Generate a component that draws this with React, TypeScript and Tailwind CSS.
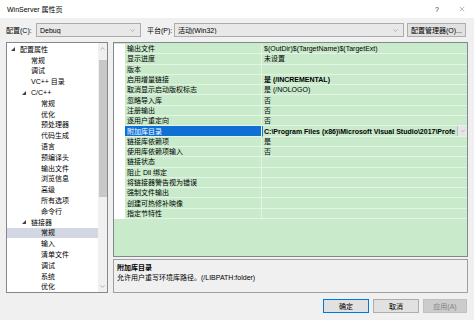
import { ChevronDown, ChevronUp, X } from 'lucide-react';

type TreeItem = { label: string; level: number; caret?: boolean; selected?: boolean };
type PropRow = { name: string; value: string; bold?: boolean; selected?: boolean };

const tree: TreeItem[] = [
  { label: '配置属性', level: 0, caret: true },
  { label: '常规', level: 1 },
  { label: '调试', level: 1 },
  { label: 'VC++ 目录', level: 1 },
  { label: 'C/C++', level: 1, caret: true },
  { label: '常规', level: 2 },
  { label: '优化', level: 2 },
  { label: '预处理器', level: 2 },
  { label: '代码生成', level: 2 },
  { label: '语言', level: 2 },
  { label: '预编译头', level: 2 },
  { label: '输出文件', level: 2 },
  { label: '浏览信息', level: 2 },
  { label: '高级', level: 2 },
  { label: '所有选项', level: 2 },
  { label: '命令行', level: 2 },
  { label: '链接器', level: 1, caret: true },
  { label: '常规', level: 2, selected: true },
  { label: '输入', level: 2 },
  { label: '清单文件', level: 2 },
  { label: '调试', level: 2 },
  { label: '系统', level: 2 },
  { label: '优化', level: 2 },
];

const props: PropRow[] = [
  { name: '输出文件', value: '$(OutDir)$(TargetName)$(TargetExt)' },
  { name: '显示进度', value: '未设置' },
  { name: '版本', value: '' },
  { name: '启用增量链接', value: '是 (/INCREMENTAL)', bold: true },
  { name: '取消显示启动版权标志', value: '是 (/NOLOGO)' },
  { name: '忽略导入库', value: '否' },
  { name: '注册输出', value: '否' },
  { name: '逐用户重定向', value: '否' },
  {
    name: '附加库目录',
    value: 'C:\\Program Files (x86)\\Microsoft Visual Studio\\2017\\Profe',
    bold: true,
    selected: true,
  },
  { name: '链接库依赖项', value: '是' },
  { name: '使用库依赖项输入', value: '否' },
  { name: '链接状态', value: '' },
  { name: '阻止 Dll 绑定', value: '' },
  { name: '将链接器警告视为错误', value: '' },
  { name: '强制文件输出', value: '' },
  { name: '创建可热修补映像', value: '' },
  { name: '指定节特性', value: '' },
];

const indent = ['pl-[4px]', 'pl-[15px]', 'pl-[25px]'];

function Combo({ text, className }: { text: string; className: string }) {
  return (
    <div
      className={`flex h-[14px] items-center border border-[#acacac] bg-[#e8e8e8] pl-[3px] pr-[4px] ${className}`}
    >
      <span className="flex-1 truncate">{text}</span>
      <ChevronDown size={7} strokeWidth={1.5} className="text-[#707070]" />
    </div>
  );
}

function Caret() {
  return (
    <svg width="4" height="4" viewBox="0 0 4 4" className="mr-[5px]">
      <polygon points="4,0 4,4 0,4" fill="#404040" />
    </svg>
  );
}

export default function App() {
  return (
    <div className="flex h-[320px] w-[474px] flex-col bg-[#f0f0f0] font-['Liberation_Sans','Noto_Sans_CJK_SC',sans-serif] text-[7px] leading-none text-black">
      {/* title bar */}
      <div className="flex h-[18px] items-center bg-white pl-[7px] pr-[8px]">
        <span className="text-[7px]">WinServer 属性页</span>
        <span className="ml-auto mr-[19px] text-[7px] text-[#303030]">?</span>
        <X size={8} strokeWidth={1} className="text-[#303030]" />
      </div>

      {/* configuration row */}
      <div className="mt-[5px] flex h-[14px] items-center pl-[6px]">
        <span className="w-[30px]">配置(C):</span>
        <Combo text="Debug" className="w-[105px]" />
        <span className="ml-[6px] w-[27px]">平台(P):</span>
        <Combo text="活动(Win32)" className="w-[230px]" />
        <button className="ml-[3px] flex h-[14px] w-[59px] items-center justify-center border border-[#adadad] bg-[#e1e1e1]">
          配置管理器(O)...
        </button>
      </div>

      {/* main area */}
      <div className="mt-[5px] flex h-[251px] pl-[6px]">
        {/* tree */}
        <div className="flex w-[102px] border border-[#828790] bg-white">
          <div className="flex flex-1 flex-col overflow-hidden pt-[1px]">
            {tree.map((item, i) => (
              <div
                key={i}
                className={`flex h-[10.8px] shrink-0 items-center ${indent[item.level]} ${
                  item.selected ? 'bg-[#d3d6e3]' : ''
                }`}
              >
                <span className="flex w-[9px] justify-start">{item.caret && <Caret />}</span>
                <span className="whitespace-nowrap">{item.label}</span>
              </div>
            ))}
          </div>
          <div className="flex w-[9px] flex-col items-center bg-[#f0f0f0]">
            <div className="flex h-[11px] items-center">
              <ChevronUp size={7} strokeWidth={1.5} className="text-[#606060]" />
            </div>
            <div className="mt-[6px] h-[137px] w-[8px] bg-[#c8c8c8]" />
            <div className="mt-auto flex h-[11px] items-center">
              <ChevronDown size={7} strokeWidth={1.5} className="text-[#606060]" />
            </div>
          </div>
        </div>

        {/* property grid + description */}
        <div className="ml-[5px] flex w-[355px] flex-col">
          <div className="flex flex-1 flex-col border border-[#828790] bg-[#c9ebcb] pt-[1px]">
            {props.map((row, i) => (
              <div key={i} className="flex h-[10.3px] shrink-0">
                <div className="w-[11px] bg-white" />
                <div
                  className={`flex w-[137px] items-center border-b border-r border-[#e4f4e4] pl-[2px] whitespace-nowrap ${
                    row.selected ? 'bg-[#0e6fd5] text-white' : ''
                  }`}
                >
                  {row.name}
                </div>
                <div
                  className={`flex flex-1 items-center overflow-hidden border-b border-[#e4f4e4] ${
                    row.bold ? 'font-bold' : ''
                  } ${row.selected ? 'border-l border-l-[#1e73d8]' : 'pl-[1px]'}`}
                >
                  <span className="flex-1 whitespace-nowrap pl-[1px]">{row.value}</span>
                  {row.selected && (
                    <span className="flex h-full w-[10px] items-center justify-center border-l border-[#c0c0c0] bg-[#e6e6e6]">
                      <ChevronDown size={6} strokeWidth={1.5} className="text-[#707070]" />
                    </span>
                  )}
                </div>
              </div>
            ))}
          </div>
          <div className="mt-[2px] flex h-[34px] flex-col gap-[3px] border border-[#a0a0a0] bg-[#f0f0f0] pl-[3px] pt-[4px]">
            <span className="font-bold">附加库目录</span>
            <span>允许用户重写环境库路径。(/LIBPATH:folder)</span>
          </div>
        </div>
      </div>

      {/* footer buttons */}
      <div className="mt-[6px] flex h-[14px] justify-end gap-[4px] pr-[7px]">
        <button className="flex w-[46px] items-center justify-center border border-[#0078d7] bg-[#e1e1e1]">
          确定
        </button>
        <button className="flex w-[46px] items-center justify-center border border-[#adadad] bg-[#e1e1e1]">
          取消
        </button>
        <button className="flex w-[44px] items-center justify-center border border-[#bfbfbf] bg-[#cccccc] text-[#838383]">
          应用(A)
        </button>
      </div>
    </div>
  );
}
